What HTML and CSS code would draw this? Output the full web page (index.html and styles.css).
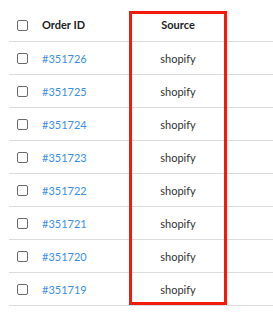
FILE: index.html
```html
<!DOCTYPE html>
<html>
<head>
<meta charset="utf-8">
<link rel="stylesheet" href="styles.css">
</head>
<body>
<div class="wrap">
  <div class="table">
    <div class="row head">
      <div class="cell cb"><span class="box"></span></div>
      <div class="cell id">Order ID</div>
      <div class="cell src">Source</div>
      <div class="cell rest"></div>
    </div>
    <div class="row"><div class="cell cb"><span class="box"></span></div><div class="cell id"><a>#351726</a></div><div class="cell src">shopify</div><div class="cell rest"></div></div>
    <div class="row"><div class="cell cb"><span class="box"></span></div><div class="cell id"><a>#351725</a></div><div class="cell src">shopify</div><div class="cell rest"></div></div>
    <div class="row"><div class="cell cb"><span class="box"></span></div><div class="cell id"><a>#351724</a></div><div class="cell src">shopify</div><div class="cell rest"></div></div>
    <div class="row"><div class="cell cb"><span class="box"></span></div><div class="cell id"><a>#351723</a></div><div class="cell src">shopify</div><div class="cell rest"></div></div>
    <div class="row"><div class="cell cb"><span class="box"></span></div><div class="cell id"><a>#351722</a></div><div class="cell src">shopify</div><div class="cell rest"></div></div>
    <div class="row"><div class="cell cb"><span class="box"></span></div><div class="cell id"><a>#351721</a></div><div class="cell src">shopify</div><div class="cell rest"></div></div>
    <div class="row"><div class="cell cb"><span class="box"></span></div><div class="cell id"><a>#351720</a></div><div class="cell src">shopify</div><div class="cell rest"></div></div>
    <div class="row"><div class="cell cb"><span class="box"></span></div><div class="cell id"><a>#351719</a></div><div class="cell src">shopify</div><div class="cell rest"></div></div>
  </div>
  <div class="highlight"></div>
</div>
</body>
</html>
```

FILE: styles.css
```css
html, body {
  margin: 0;
  padding: 0;
  background: #ffffff;
}
body {
  font-family: Lato, "Noto Sans", sans-serif;
  font-size: 11px;
  color: #333333;
}
.wrap {
  position: relative;
  padding: 8px 0 0 9px;
}
.table {
  display: flex;
  flex-direction: column;
}
.row {
  display: grid;
  grid-template-columns: 33px 87px 98px 1fr;
  height: 32px;
  border-bottom: 1px solid #dcdcdc;
}
.row.head {
  height: 33px;
  font-weight: 700;
  color: #222222;
}
.cell {
  display: flex;
  align-items: center;
}
.cb {
  padding-left: 8px;
}
.box {
  width: 9px;
  height: 9px;
  border: 1.5px solid #6b6b6b;
  border-radius: 2px;
  background: #fff;
}
.head .box {
  margin-top: 1px;
}
.id a {
  color: #3d8fe3;
  text-decoration: none;
}
.src {
  justify-content: center;
}
.highlight {
  position: absolute;
  left: 129px;
  top: 11px;
  width: 92px;
  height: 288px;
  border: 3px solid #f21a0a;
}
```
